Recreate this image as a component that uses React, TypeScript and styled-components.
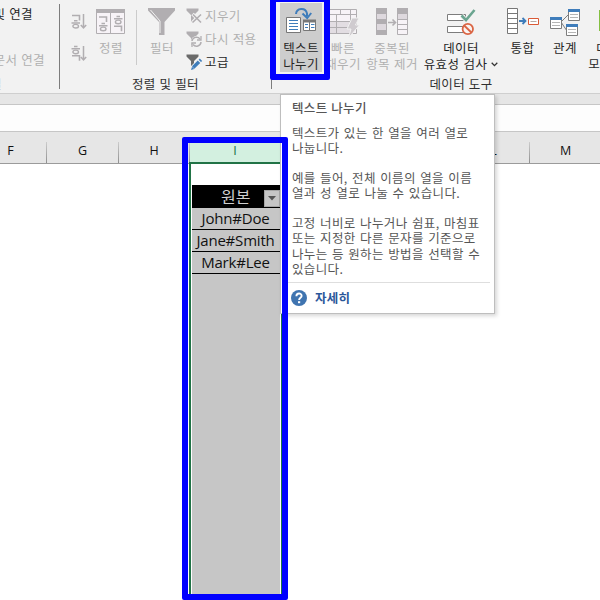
import React from "react";
import styled, { createGlobalStyle } from "styled-components";

const Global = createGlobalStyle`
  *, *::before, *::after { box-sizing: border-box; }
  html, body { margin: 0; padding: 0; overflow: hidden; }
  body { font-family: "Noto Sans CJK KR", sans-serif; }
  svg { display: block; flex: none; }
`;

const Window = styled.div`
  position: relative;
  width: 600px;
  height: 600px;
  overflow: hidden;
  display: flex;
  flex-direction: column;
  background: #fff;
`;

/* ---------- ribbon ---------- */

const Ribbon = styled.div`
  flex: none;
  display: flex;
  height: 94px;
  overflow: hidden;
  background: #f2f2f2;
  border-bottom: 1px solid #cfcfcf;
`;

const Group = styled.section<{ $width: number }>`
  flex: none;
  width: ${(p) => p.$width}px;
  display: flex;
  flex-direction: column;
`;

const GroupBody = styled.div<{ $left?: number }>`
  height: 75px;
  display: flex;
  padding-left: ${(p) => p.$left ?? 0}px;
`;

const Caption = styled.div`
  height: 18px;
  line-height: 18px;
  font-size: 12.5px;
  letter-spacing: 0.35px;
  word-spacing: 0.7px;
  text-align: center;
  white-space: nowrap;
  color: #303030;
`;

const GroupRule = styled.div`
  flex: none;
  width: 1px;
  height: 85px;
  margin-top: 4px;
  background: #7d7d7d;
`;

const InnerRule = styled.div`
  flex: none;
  width: 1px;
  height: 55px;
  margin: 10px 3px 0 2px;
  background: #cbcbcb;
`;

const Tool = styled.div<{ $width: number; $off?: boolean; $active?: boolean }>`
  flex: none;
  width: ${(p) => p.$width}px;
  height: 69px;
  margin-top: 3px;
  padding-top: 1px;
  display: flex;
  flex-direction: column;
  align-items: center;
  background: ${(p) => (p.$active ? "#cdcdcd" : "transparent")};
  color: ${(p) => (p.$off ? "#b0b0b0" : "#262626")};
`;

const ToolLabel = styled.div`
  display: flex;
  justify-content: center;
  align-items: center;
  gap: 4px;
  height: 16px;
  font-size: 12.5px;
  letter-spacing: 0.4px;
  word-spacing: 0.9px;
  line-height: 16px;
  white-space: nowrap;
`;

const SortPair = styled.div`
  flex: none;
  width: 17px;
  margin-left: 11px;
  padding-top: 13px;
  display: flex;
  flex-direction: column;
  gap: 14px;
`;

const FilterList = styled.div`
  padding: 4px 0 0 2px;
  display: flex;
  flex-direction: column;
`;

const FilterItem = styled.div<{ $off?: boolean }>`
  height: 23px;
  display: flex;
  align-items: center;
  gap: 2px;
  font-size: 12.5px;
  letter-spacing: 0.4px;
  word-spacing: 0.7px;
  white-space: nowrap;
  color: ${(p) => (p.$off ? "#b0b0b0" : "#262626")};
`;

const LinkColumn = styled.div`
  flex: none;
  width: 59px;
  display: flex;
  flex-direction: column;
  overflow: hidden;
`;

const LinkLine = styled.div<{ $top: number; $right: number; $off?: boolean }>`
  flex: none;
  align-self: flex-end;
  height: 18px;
  line-height: 18px;
  margin-top: ${(p) => p.$top}px;
  margin-right: ${(p) => p.$right}px;
  font-size: 12.5px;
  letter-spacing: 0.4px;
  word-spacing: 0.7px;
  white-space: nowrap;
  color: ${(p) => (p.$off ? "#b0b0b0" : "#262626")};
`;

/* ---------- formula bar and sheet ---------- */

const Band = styled.div`
  flex: none;
  height: 11px;
  background: #e6e6e6;
  border-bottom: 1px solid #c6c6c6;
`;

const FormulaBar = styled.div`
  flex: none;
  height: 27px;
  background: #fdfdfd;
  border-bottom: 1px solid #c6c6c6;
`;

const HeaderRow = styled.div`
  flex: none;
  display: flex;
  height: 32px;
  margin-left: -25px;
  padding-top: 10px;
  background: #e6e6e6;
  border-bottom: 1px solid #9b9b9b;
`;

const ColumnHead = styled.div<{ $width: number; $selected?: boolean }>`
  flex: none;
  width: ${(p) => p.$width}px;
  height: 21px;
  line-height: 18px;
  text-align: center;
  font-family: "Open Sans", sans-serif;
  font-size: 12.5px;
  color: ${(p) => (p.$selected ? "#217346" : "#111")};
  background: ${(p) => (p.$selected ? "#d3f0e0" : "transparent")};
  border-right: 1px solid;
  border-image: linear-gradient(#cfcfcf, #8c8c8c) 1;
`;

const Sheet = styled.div`
  flex: 1;
  display: flex;
  padding-left: 189px;
  background: #fff;
`;

const Column = styled.div`
  position: relative;
  width: 93px;
  margin-top: -2px;
  border-left: 2px solid #217346;
  border-top: 2px solid #217346;
  border-right: 1px solid #217346;
  padding: 0 1px;
  display: flex;
  flex-direction: column;
  background: #fff;
`;

const BlankCell = styled.div`
  flex: none;
  height: 21px;
`;

const TitleCell = styled.div`
  flex: none;
  display: flex;
  align-items: center;
  justify-content: space-between;
  height: 23px;
  padding-left: 29px;
  background: #000;
  color: #cfcfcf;
  font-size: 16px;
  line-height: 20px;
  padding-bottom: 1px;
  white-space: nowrap;
`;

const DropButton = styled.div`
  width: 16px;
  height: 17px;
  margin-top: 4px;
  display: flex;
  align-items: center;
  justify-content: center;
  background: #c6c6c6;
  border: 1px solid #a5a5a5;
`;

const Cell = styled.div`
  flex: none;
  height: 22px;
  line-height: 20px;
  padding-right: 1px;
  text-align: center;
  white-space: nowrap;
  font-family: "Open Sans", sans-serif;
  font-size: 15px;
  letter-spacing: -0.2px;
  color: #111;
  background: #c6c6c6;
  border-bottom: 1px solid #000;
`;

const SelectedFill = styled.div`
  flex: 1;
  background: #c6c6c6;
`;

/* ---------- overlays ---------- */

const Tooltip = styled.div`
  position: absolute;
  left: 280px;
  top: 94px;
  width: 215px;
  height: 220px;
  padding: 5px 4px 0 7px;
  background: #fff;
  border: 1px solid #bebebe;
  box-shadow: 2px 2px 4px rgba(0, 0, 0, 0.16);
  color: #565656;
  font-size: 12.5px;
`;

const TipTitle = styled.div`
  height: 16px;
  line-height: 16px;
  padding-left: 4px;
  font-weight: 500;
  letter-spacing: 0.35px;
  word-spacing: 0.5px;
`;

const TipText = styled.p`
  margin: 0 0 15px;
  padding-left: 4px;
  line-height: 15.1px;
  letter-spacing: 0.37px;
  word-spacing: 1.2px;
  white-space: nowrap;
`;

const TipBody = styled.div`
  height: 166px;
  padding-top: 9px;
`;

const TipFooter = styled.div`
  height: 30px;
  border-top: 1px solid #dedede;
  display: flex;
  align-items: center;
  gap: 8px;
  padding-left: 3px;
  color: #2b579a;
  font-weight: 700;
  letter-spacing: 0.3px;
`;

const Highlight = styled.div<{ $x: number; $y: number; $w: number; $h: number }>`
  position: absolute;
  left: ${(p) => p.$x}px;
  top: ${(p) => p.$y}px;
  width: ${(p) => p.$w}px;
  height: ${(p) => p.$h}px;
  border: 6px solid #0000ff;
  border-radius: 2px;
`;

/* ---------- icons ---------- */

const GREY = "#b1aeb1";

/* Consonants used by the sort icons. */
const Giyeok = ({ x, y }: { x: number; y: number }) => (
  <path d={`M${x} ${y}h7.500v5`} fill="none" stroke={GREY} strokeWidth="1.6" />
);
const Hieut = ({ x, y }: { x: number; y: number }) => (
  <g fill="none" stroke={GREY} strokeWidth="1.4">
    <path d={`M${x + 2.5} ${y}h3.500M${x} ${y + 2.2}h8.500`} />
    <ellipse cx={x + 4.2} cy={y + 5.4} rx="2.800" ry="1.800" />
  </g>
);

const SortIcon = ({ desc }: { desc?: boolean }) => (
  <svg width="17" height="18" viewBox="0 0 17 18">
    {desc ? (
      <>
        <Hieut x={0.5} y={1.5} />
        <Giyeok x={1} y={10.7} />
      </>
    ) : (
      <>
        <Giyeok x={1} y={2.5} />
        <Hieut x={0.5} y={7.8} />
      </>
    )}
    <path d="M12.500 1v14M9.800 12l2.700 2.800 2.700-2.800" fill="none" stroke={GREY} strokeWidth="1.500" />
  </svg>
);

const SortDialogIcon = () => (
  <svg width="46" height="36" viewBox="0 0 46 36">
    <path d="M8.500 6h28v23.500h-28z" fill="#f7f3f7" stroke={GREY} />
    <path d="M8 5h29v4H8z" fill={GREY} />
    <path d="M22.500 9v20" stroke={GREY} />
    <Giyeok x={11} y={13} />
    <Hieut x={11} y={19.5} />
    <Hieut x={26} y={12.5} />
    <Giyeok x={26} y={22.3} />
  </svg>
);

const FilterIcon = () => (
  <svg width="44" height="36" viewBox="0 0 44 36">
    <path d="M8 4h27v2.500l-10.500 11.500v13h-5.500v-13l-11-11.500z" fill={GREY} />
    <path d="M10.500 6l9.500 11v12" fill="none" stroke="#f2f2f2" strokeWidth="1" />
  </svg>
);

const SmallFilterIcon = ({ kind }: { kind: "clear" | "reapply" | "advanced" }) => (
  <svg width="17" height="18" viewBox="0 0 17 18">
    <path
      d="M0.500 1.500h12v2l-4.500 4.500v6.500h-3v-6.500l-4.500-4.500z"
      fill={kind === "advanced" ? "#6a6a6a" : GREY}
    />
    {kind === "clear" && (
      <>
        <path d="M6.500 7l8.500 8M15 6.500l-8.500 9" stroke="#f2f2f2" strokeWidth="3.500" />
        <path d="M7 7.500l8 8M15 7.500l-8.500 8" stroke={GREY} strokeWidth="1.600" />
      </>
    )}
    {kind === "reapply" && (
      <>
        <circle cx="10.500" cy="11.500" r="5.500" fill="#f2f2f2" />
        <path d="M6 11a4.500 4.500 0 0 1 8-2M15 12a4.500 4.500 0 0 1-8 2.500" fill="none" stroke={GREY} strokeWidth="1.500" />
        <path d="M15 6v4h-4M6 17v-4h4" fill="none" stroke={GREY} strokeWidth="1.300" />
      </>
    )}
    {kind === "advanced" && (
      <>
        <path d="M5.500 16.500L15.500 6.500" stroke="#f2f2f2" strokeWidth="5.500" />
        <path d="M7.200 14.500L13 8.700M13.800 7.900L15 6.700" stroke="#3f7dbb" strokeWidth="3.400" />
        <path d="M5 17l1-3.200 2.300 2.200z" fill="#3f7dbb" />
      </>
    )}
  </svg>
);

const TextToColumnsIcon = () => (
  <svg width="42" height="36" viewBox="0 0 42 36">
    <path d="M6.500 13.500h14v15h-14z" fill="#fff" stroke="#777" />
    <path d="M9 16.500h9M9 19.500h9M9 22.500h9M9 25.500h9" stroke="#3f7dbb" />
    <path d="M23.500 16.500h12v10h-12z" fill="#fff" stroke="#777" />
    <path d="M23 15.500h13v3h-13z" fill="#777" />
    <path d="M29.500 18v8" stroke="#777" />
    <path d="M25 20.500h3M25 23.500h3M31 20.500h3.500M31 23.500h3.500" stroke="#3f7dbb" />
    <path d="M16 10c0.500-6 9.500-7 11-0.500v3" fill="none" stroke="#3f7dbb" strokeWidth="2" />
    <path d="M22.500 9.500l4.700 4.500 4-5" fill="none" stroke="#3f7dbb" strokeWidth="2" />
  </svg>
);

const FlashFillIcon = () => (
  <svg width="42" height="36" viewBox="0 0 42 36">
    <path d="M2.500 5.500h32v24h-32z" fill="#f7f3f7" stroke={GREY} />
    <path d="M3 18h27v11H3z" fill="#e2dde2" />
    <path d="M2 10.500h33M2 17.500h33M2 23.500h33M18.500 5v5M14.500 10v20M28.500 5v13" stroke={GREY} />
    <path d="M30 14h7l-3.500 7h4L26.500 34l2.500-9h-4z" fill="#cfcbcf" stroke="#f2f2f2" />
  </svg>
);

const DedupeIcon = () => (
  <svg width="56" height="36" viewBox="0 0 56 36">
    <path d="M12.500 4.500h10v26h-10z" fill="#ded9de" stroke={GREY} />
    <path d="M12 4h11v6H12zM12 15h11v5H12zM12 26h11v5H12z" fill={GREY} />
    <path d="M24 18.500h7M28.500 15.500l3 3-3 3" fill="none" stroke={GREY} strokeWidth="1.600" />
    <path d="M33.500 4.500h10v26h-10z" fill="#f7f3f7" stroke={GREY} />
    <path d="M33 4h11v6H33z" fill={GREY} />
    <path d="M34 10h9v5h-9z" fill="#ded9de" />
    <path d="M33 15.500h11M33 20.500h11M33 25.500h11" stroke={GREY} />
  </svg>
);

const ValidationIcon = () => (
  <svg width="82" height="36" viewBox="0 0 82 36">
    <path d="M27.500 10.500h18v6h-18zM27.500 22.500h18v6h-18z" fill="#fff" stroke="#7d7d7d" />
    <path d="M41.500 11.500l4.500 4.500 8.500-10" fill="none" stroke="#f2f2f2" strokeWidth="4.500" />
    <path d="M41.500 11.500l4.500 4.500 8.500-10" fill="none" stroke="#6ba590" strokeWidth="2.600" />
    <circle cx="47.800" cy="25" r="5.200" fill="#f9f4f2" stroke="#da6544" strokeWidth="1.800" />
    <path d="M44.200 21.500l7.200 7" stroke="#da6544" strokeWidth="1.800" />
  </svg>
);

const ConsolidateIcon = () => (
  <svg width="41" height="36" viewBox="0 0 41 36">
    <path d="M5.500 4.500h10v25h-10z" fill="#fff" stroke="#777" />
    <path d="M5 9.500h11M5 14.500h11M5 19.500h11M5 24.500h11" stroke="#777" />
    <path d="M17 17h6M20.500 14l3 3-3 3" fill="none" stroke="#3f7dbb" strokeWidth="1.800" />
    <path d="M26.500 14.500h10v6h-10z" fill="#fff" stroke="#da5a36" />
    <path d="M28.500 17.500h6" stroke="#b9a9a3" />
  </svg>
);

const MiniTable = ({ x, y }: { x: number; y: number }) => (
  <g>
    <path d={`M${x + 0.5} ${y + 0.5}h11v11h-11z`} fill="#fff" stroke="#7d7d7d" />
    <path d={`M${x} ${y}h12v3h-12z`} fill="#3f7dbb" />
    <path d={`M${x + 2} ${y + 5.5}h8M${x + 2} ${y + 8.5}h8`} stroke="#b5b5b5" />
  </g>
);

const RelationsIcon = () => (
  <svg width="44" height="36" viewBox="0 0 44 36">
    <path d="M18 18l7-7M18 18l6 9" fill="none" stroke="#7d7d7d" />
    <MiniTable x={7} y={13} />
    <MiniTable x={25} y={5} />
    <MiniTable x={23} y={20} />
  </svg>
);

const ModelIcon = () => (
  <svg width="54" height="36" viewBox="0 0 54 36">
    <path d="M12 6h28v21H12z" fill="#84bf41" />
  </svg>
);

const Chevron = () => (
  <svg width="7" height="5" viewBox="0 0 7 5">
    <path d="M0.700 0.800l2.800 2.800 2.800-2.800" fill="none" stroke="#333" strokeWidth="1.300" />
  </svg>
);

const HelpIcon = () => (
  <svg width="16" height="16" viewBox="0 0 16 16">
    <circle cx="8" cy="8" r="8" fill="#3f74b0" />
    <path d="M5.400 6.200c0-3.600 5.300-3.400 5.200-0.300 0 1.800-2.500 1.900-2.500 4" fill="none" stroke="#fff" strokeWidth="1.900" />
    <path d="M7 11.200h2.200v2H7z" fill="#fff" />
  </svg>
);

const columns: { name: string; width: number; selected?: boolean }[] = [
  { name: "F", width: 72 },
  { name: "G", width: 72 },
  { name: "H", width: 71 },
  { name: "I", width: 91, selected: true },
  { name: "J", width: 89 },
  { name: "K", width: 88 },
  { name: "L", width: 72 },
  { name: "M", width: 72 },
];

const tools: {
  icon: React.ReactNode;
  width: number;
  lines: string[];
  off?: boolean;
  active?: boolean;
  menu?: boolean;
}[] = [
  { icon: <TextToColumnsIcon />, width: 42, lines: ["텍스트", "나누기"], active: true },
  { icon: <FlashFillIcon />, width: 42, lines: ["빠른", "채우기"], off: true },
  { icon: <DedupeIcon />, width: 56, lines: ["중복된", "항목 제거"], off: true },
  { icon: <ValidationIcon />, width: 82, lines: ["데이터", "유효성 검사"], menu: true },
  { icon: <ConsolidateIcon />, width: 41, lines: ["통합"] },
  { icon: <RelationsIcon />, width: 44, lines: ["관계"] },
  { icon: <ModelIcon />, width: 54, lines: ["데이터", "모델 관리"] },
];

const paragraphs = [
  ["텍스트가 있는 한 열을 여러 열로", "나눕니다."],
  ["예를 들어, 전체 이름의 열을 이름", "열과 성 열로 나눌 수 있습니다."],
  ["고정 너비로 나누거나 쉼표, 마침표", "또는 지정한 다른 문자를 기준으로", "나누는 등 원하는 방법을 선택할 수", "있습니다."],
];

export default function App() {
  return (
    <Window>
      <Global />
      <Ribbon>
        <LinkColumn>
          <LinkLine $top={5} $right={26}>쿼리 및 연결</LinkLine>
          <LinkLine $top={28} $right={14} $off>통합 문서 연결</LinkLine>
          <LinkLine $top={6} $right={57} $off>쿼리 및 연결</LinkLine>
        </LinkColumn>
        <GroupRule />
        <Group $width={211}>
          <GroupBody>
            <SortPair>
              <SortIcon />
              <SortIcon desc />
            </SortPair>
            <Tool $width={46} $off>
              <SortDialogIcon />
              <ToolLabel>정렬</ToolLabel>
            </Tool>
            <InnerRule />
            <Tool $width={44} $off>
              <FilterIcon />
              <ToolLabel>필터</ToolLabel>
            </Tool>
            <FilterList>
              <FilterItem $off><SmallFilterIcon kind="clear" />지우기</FilterItem>
              <FilterItem $off><SmallFilterIcon kind="reapply" />다시 적용</FilterItem>
              <FilterItem><SmallFilterIcon kind="advanced" />고급</FilterItem>
            </FilterList>
          </GroupBody>
          <Caption>정렬 및 필터</Caption>
        </Group>
        <GroupRule />
        <Group $width={378}>
          <GroupBody $left={8}>
            {tools.map((t) => (
              <Tool key={t.lines.join()} $width={t.width} $off={t.off} $active={t.active}>
                {t.icon}
                {t.lines.map((line, i) => (
                  <ToolLabel key={line}>
                    {line}
                    {t.menu && i === 1 && <Chevron />}
                  </ToolLabel>
                ))}
              </Tool>
            ))}
          </GroupBody>
          <Caption>데이터 도구</Caption>
        </Group>
      </Ribbon>
      <Band />
      <FormulaBar />
      <HeaderRow>
        {columns.map((c) => (
          <ColumnHead key={c.name} $width={c.width} $selected={c.selected}>{c.name}</ColumnHead>
        ))}
      </HeaderRow>
      <Sheet>
        <Column>
          <BlankCell />
          <TitleCell>
            원본
            <DropButton>
              <svg width="8" height="5" viewBox="0 0 8 5"><path d="M0 0h8L4 4.500z" fill="#555" /></svg>
            </DropButton>
          </TitleCell>
          {["John#Doe", "Jane#Smith", "Mark#Lee"].map((name) => (
            <Cell key={name}>{name}</Cell>
          ))}
          <SelectedFill />
        </Column>
      </Sheet>
      <Tooltip>
        <TipTitle>텍스트 나누기</TipTitle>
        <TipBody>
          {paragraphs.map((lines) => (
            <TipText key={lines[0]}>
              {lines.map((line) => (
                <React.Fragment key={line}>{line}<br /></React.Fragment>
              ))}
            </TipText>
          ))}
        </TipBody>
        <TipFooter>
          <HelpIcon />
          자세히
        </TipFooter>
      </Tooltip>
      <Highlight $x={270} $y={-4} $w={60} $h={84} />
      <Highlight $x={182} $y={137} $w={106} $h={463} />
    </Window>
  );
}
